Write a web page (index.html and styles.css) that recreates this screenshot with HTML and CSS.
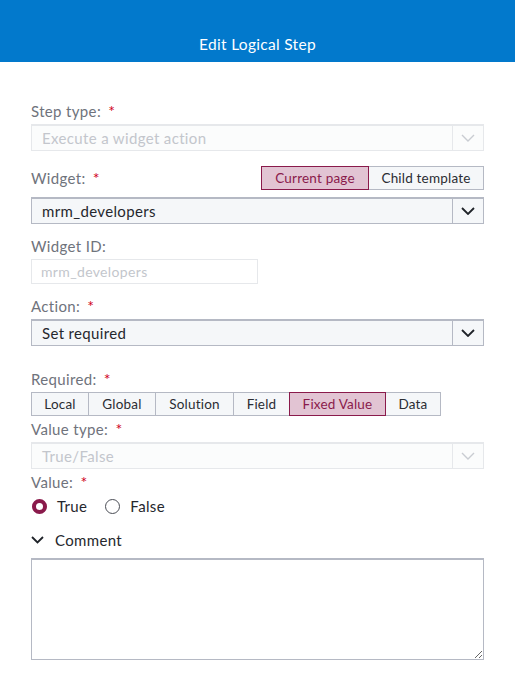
FILE: index.html
```html
<!DOCTYPE html>
<html>
<head>
<meta charset="utf-8">
<link rel="stylesheet" href="styles.css">
</head>
<body>
<header class="header"><span class="title">Edit Logical Step</span></header>
<main class="form">
  <div class="field f-step">
    <div class="label">Step type: <span class="req">*</span></div>
    <div class="select disabled">
      <span class="value">Execute a widget action</span>
      <span class="btn"><svg width="14" height="8" viewBox="0 0 14 8"><path d="M1 1l6 6 6-6" fill="none" stroke="#c9ccd2" stroke-width="1.4"/></svg></span>
    </div>
  </div>

  <div class="field f-widget">
    <div class="row-label">
      <div class="label">Widget: <span class="req">*</span></div>
      <div class="toggle">
        <span class="opt on">Current page</span><span class="opt">Child template</span>
      </div>
    </div>
    <div class="select">
      <span class="value">mrm_developers</span>
      <span class="btn"><svg width="14" height="8" viewBox="0 0 14 8"><path d="M1 1l6 6 6-6" fill="none" stroke="#1f2329" stroke-width="1.8"/></svg></span>
    </div>
  </div>

  <div class="field f-id">
    <div class="label">Widget ID:</div>
    <div class="text disabled">mrm_developers</div>
  </div>

  <div class="field f-action">
    <div class="label">Action: <span class="req">*</span></div>
    <div class="select">
      <span class="value">Set required</span>
      <span class="btn"><svg width="14" height="8" viewBox="0 0 14 8"><path d="M1 1l6 6 6-6" fill="none" stroke="#1f2329" stroke-width="1.8"/></svg></span>
    </div>
  </div>

  <div class="field f-req">
    <div class="label">Required: <span class="req">*</span></div>
    <div class="seg">
      <span class="s s-local">Local</span><span class="s s-global">Global</span><span class="s s-sol">Solution</span><span class="s s-field">Field</span><span class="s s-fixed on">Fixed Value</span><span class="s s-data">Data</span>
    </div>
  </div>

  <div class="field f-vtype">
    <div class="label">Value type: <span class="req">*</span></div>
    <div class="select disabled">
      <span class="value">True/False</span>
      <span class="btn"><svg width="14" height="8" viewBox="0 0 14 8"><path d="M1 1l6 6 6-6" fill="none" stroke="#c9ccd2" stroke-width="1.4"/></svg></span>
    </div>
  </div>

  <div class="field f-value">
    <div class="label">Value: <span class="req">*</span></div>
    <div class="radios">
      <label class="radio"><span class="dot on"></span>True</label>
      <label class="radio"><span class="dot"></span>False</label>
    </div>
  </div>

  <div class="comment-head">
    <svg width="13" height="8" viewBox="0 0 13 8"><path d="M1 1l5.5 5.5L12 1" fill="none" stroke="#1f2329" stroke-width="1.8"/></svg>
    <span>Comment</span>
  </div>
  <textarea class="comment"></textarea>
</main>
</body>
</html>
```

FILE: styles.css
```css
* { box-sizing: border-box; }
html, body { margin: 0; padding: 0; background: #fff; }
body {
  font-family: Lato, "Noto Sans", "Liberation Sans", sans-serif;
  font-size: 15px;
  letter-spacing: 0.35px;
  color: #2b2d33;
}
.header {
  height: 62px;
  background: #0279cc;
  display: flex;
  align-items: flex-end;
  justify-content: center;
  padding-bottom: 9px;
}
.title { color: #fff; font-size: 15.5px; line-height: 18px; letter-spacing: 0.3px; }
.form { padding: 0 31px; width: 515px; }
.field { display: flex; flex-direction: column; }
.label {
  height: 20px;
  line-height: 20px;
  color: #6f737c;
  font-size: 15px;
  margin-bottom: 3px;
}
.req { color: #d0021b; margin-left: 3px; font-size: 16px; }
.f-step { margin-top: 39px; }
.f-widget { margin-top: 15px; }
.f-id { margin-top: 12px; }
.f-action { margin-top: 12px; }
.f-req { margin-top: 23px; }
.f-vtype { margin-top: 3px; }
.f-value { margin-top: 3px; }
.f-value .label { margin-bottom: 2px; }

.select {
  display: flex;
  height: 27px;
  border: 1px solid #b5b9c4;
  border-top-width: 2px;
  background: #f5f7f9;
}
.select .value {
  flex: 1;
  padding-left: 10px;
  line-height: 24px;
  font-size: 15px;
  color: #25272d;
}
.select .btn {
  width: 31px;
  border-left: 1px solid #b5b9c4;
  display: flex;
  align-items: center;
  justify-content: center;
}
.select.disabled { border: 1px solid #e6e8eb; border-top-width: 2px; background: #fbfcfc; }
.select.disabled .btn { border-left: 1px solid #e6e8eb; }
.select.disabled .value { color: #c3c6cc; }

.row-label {
  display: flex;
  justify-content: space-between;
  align-items: center;
  height: 24px;
  margin-bottom: 7px;
}
.row-label .label { margin-bottom: 0; }
.toggle { display: flex; height: 24px; }
.opt {
  height: 24px;
  line-height: 22px;
  border: 1px solid #b5b9c4;
  background: #f5f7f9;
  font-size: 13.5px;
  letter-spacing: 0.2px;
  color: #2b2d33;
  text-align: center;
}
.opt:first-child { width: 108px; }
.opt:last-child { width: 115px; border-left: none; }
.opt.on { background: #e2c4d3; border: 1px solid #8a1a4b; color: #8a1a4b; }

.text {
  width: 227px;
  height: 25px;
  border: 1px solid #e6e8eb;
  padding-left: 9px;
  line-height: 23px;
  font-size: 14px;
}
.text.disabled { color: #c3c6cc; }

.seg { display: flex; height: 24px; }
.s {
  height: 24px;
  line-height: 22px;
  border: 1px solid #b5b9c4;
  border-left: none;
  background: #f5f7f9;
  font-size: 13.5px;
  letter-spacing: 0.2px;
  text-align: center;
  color: #2b2d33;
}
.s-local { width: 58px; border-left: 1px solid #b5b9c4; }
.s-global { width: 67px; }
.s-sol { width: 78px; }
.s-field { width: 56px; }
.s-fixed { width: 96px; }
.s-data { width: 55px; }
.s.on { background: #e2c4d3; border: 1px solid #8a1a4b; color: #8a1a4b; margin-left: -1px; width: 97px; }

.radios { display: flex; align-items: center; height: 24px; gap: 0; }
.radio {
  display: flex;
  align-items: center;
  font-size: 15px;
  color: #25272d;
  margin-right: 17px;
  padding-left: 1px;
}
.dot {
  width: 15px;
  height: 15px;
  border-radius: 50%;
  border: 1.5px solid #4a4d55;
  margin-right: 10px;
  background: #fff;
}
.dot.on { border: 4.5px solid #8a1a4b; }

.comment-head {
  display: flex;
  align-items: center;
  height: 20px;
  margin-top: 12px;
  font-size: 15px;
  color: #25272d;
}
.comment-head svg { margin-right: 11px; }
.comment {
  display: block;
  width: 453px;
  height: 102px;
  margin-top: 8px;
  border: 1px solid #b5b9c4;
  border-top-width: 2px;
  resize: vertical;
  font-family: inherit;
  padding: 0;
}
```
